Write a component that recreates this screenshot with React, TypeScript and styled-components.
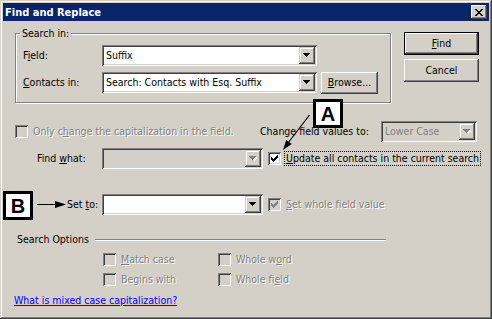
import React from "react";
import styled, { createGlobalStyle, css } from "styled-components";

const UI_FONT = `"DejaVu Sans Condensed", Tahoma, "DejaVu Sans", sans-serif`;

const GlobalStyle = createGlobalStyle`
  html, body { margin: 0; padding: 0; background: #D4D0C8; }
  body { font-family: ${UI_FONT}; font-size: 10.5px; color: #000; }
  *, *::before, *::after { box-sizing: border-box; }
`;

const raised = css`
  box-shadow: inset -1px -1px 0 #404040, inset 1px 1px 0 #fff,
    inset -2px -2px 0 #808080, inset 2px 2px 0 #D4D0C8;
`;

const raisedSoft = css`
  box-shadow: inset -1px -1px 0 #404040, inset 1px 1px 0 #D4D0C8,
    inset -2px -2px 0 #808080, inset 2px 2px 0 #fff;
`;

const sunken = css`
  box-shadow: inset 1px 1px 0 #808080, inset -1px -1px 0 #fff,
    inset 2px 2px 0 #404040, inset -2px -2px 0 #D4D0C8;
`;

const disabledText = css`
  color: #808080;
  text-shadow: 1px 1px 0 #fff;
`;

const Window = styled.div`
  position: relative;
  width: 492px;
  height: 319px;
  padding: 3px;
  background: #D4D0C8;
  box-shadow: inset -1px -1px 0 #404040, inset 1px 1px 0 #D4D0C8,
    inset -2px -2px 0 #808080, inset 2px 2px 0 #fff;
  display: flex;
  flex-direction: column;
  overflow: hidden;
`;

const TitleBar = styled.div`
  height: 18px;
  flex: none;
  background: #0A246A;
  display: flex;
  align-items: center;
  justify-content: space-between;
  padding: 0 2px;
`;

const TitleText = styled.span`
  color: #fff;
  font-weight: bold;
  font-size: 11px;
  line-height: 13px;
`;

const CloseButton = styled.span`
  width: 16px;
  height: 14px;
  background: #D4D0C8;
  ${raised};
  display: flex;
  align-items: center;
  justify-content: center;
`;

const Body = styled.div`
  padding: 12px 0 0 12px;
  display: flex;
  flex-direction: column;
`;

const TopRow = styled.div`
  display: flex;
  align-items: flex-start;
`;

const GroupBox = styled.div`
  position: relative;
  width: 376px;
  height: 70px;
  border: 1px solid #808080;
  box-shadow: inset 1px 1px 0 #fff, 1px 1px 0 #fff;
  padding: 11px 0 0 7px;
  display: grid;
  grid-template-columns: 79px 215px auto;
  grid-auto-rows: 21px;
  row-gap: 6px;
  align-items: center;
`;

const Legend = styled.span`
  position: absolute;
  top: -7px;
  left: 4px;
  padding: 0 2px;
  background: #D4D0C8;
  line-height: 13px;
`;

const Label = styled.span<{ $indent?: number; $disabled?: boolean }>`
  line-height: 13px;
  white-space: nowrap;
  padding-left: ${(p) => p.$indent ?? 0}px;
  ${(p) => p.$disabled && disabledText};
`;

const Key = styled.span`
  text-decoration: underline;
`;

const ButtonColumn = styled.div`
  display: flex;
  flex-direction: column;
  gap: 4px;
  margin: -1px 0 0 13px;
`;

const PushButton = styled.div<{ $default?: boolean; $w: number; $h: number; $gap?: number }>`
  width: ${(p) => p.$w}px;
  height: ${(p) => p.$h}px;
  margin-left: ${(p) => p.$gap ?? 0}px;
  background: #D4D0C8;
  display: flex;
  align-items: center;
  justify-content: center;
  line-height: 13px;
  ${(p) => (p.$default ? "border: 1px solid #000;" : "")}
  ${raised};
`;

const ComboBox = styled.div<{ $w: number; $disabled?: boolean }>`
  width: ${(p) => p.$w}px;
  height: 21px;
  padding: 2px;
  display: flex;
  background: ${(p) => (p.$disabled ? "#D4D0C8" : "#fff")};
  ${sunken};
`;

const ComboText = styled.span<{ $disabled?: boolean }>`
  flex: 1;
  padding-left: 2px;
  line-height: 17px;
  white-space: nowrap;
  overflow: hidden;
  color: ${(p) => (p.$disabled ? "#808080" : "#000")};
`;

const DropButton = styled.span`
  width: 16px;
  height: 17px;
  flex: none;
  background: #D4D0C8;
  display: flex;
  align-items: center;
  justify-content: center;
  ${raisedSoft};
`;

const Box = styled.span<{ $disabled?: boolean }>`
  width: 13px;
  height: 13px;
  flex: none;
  background: ${(p) => (p.$disabled ? "#D4D0C8" : "#fff")};
  display: flex;
  align-items: center;
  justify-content: center;
  ${sunken};
`;

const CheckItem = styled.div<{ $offset?: number }>`
  display: flex;
  align-items: center;
  gap: 5px;
  margin-left: ${(p) => p.$offset ?? 0}px;
`;

const FocusText = styled.span`
  border: 1px dotted #000;
  padding: 0 1px;
  line-height: 13px;
  white-space: nowrap;
  margin-left: -2px;
`;

const CapsRow = styled.div`
  display: grid;
  grid-template-columns: 245px 121px 96px;
  height: 21px;
  align-items: center;
  margin-top: 18px;
`;

const FieldRow = styled.div<{ $top: number }>`
  display: grid;
  grid-template-columns: 87px 161px auto;
  height: 21px;
  align-items: center;
  margin-top: ${(p) => p.$top}px;
`;

const SectionHeader = styled.div`
  display: flex;
  align-items: center;
  width: 371px;
  height: 13px;
  margin-top: 18px;
  padding-left: 2px;
`;

const SectionRule = styled.div`
  flex: 1;
  height: 2px;
  border-top: 1px solid #808080;
  border-bottom: 1px solid #fff;
  margin-left: 6px;
`;

const OptionsGrid = styled.div`
  display: grid;
  grid-template-columns: 115px auto;
  grid-auto-rows: 13px;
  row-gap: 7px;
  margin: 7px 0 0 88px;
`;

const HelpLink = styled.a`
  align-self: flex-start;
  color: #0000ff;
  text-decoration: underline;
  line-height: 13px;
  margin: 8px 0 0 -1px;
  cursor: pointer;
`;

const Callout = styled.div<{ $x: number; $y: number }>`
  position: absolute;
  left: ${(p) => p.$x}px;
  top: ${(p) => p.$y}px;
  width: 30px;
  height: 29px;
  border: 3px solid #000;
  background: #fff;
  display: flex;
  align-items: center;
  justify-content: center;
  font: bold 20px "Liberation Sans", Arial, sans-serif;
  line-height: 1;
`;

const Overlay = styled.svg`
  position: absolute;
  left: 0;
  top: 0;
  pointer-events: none;
`;

const Arrow = ({ disabled }: { disabled?: boolean }) => (
  <svg width="8" height="5" viewBox="0 0 8 5">
    {disabled && <path d="M2 1h7v1H2z M3 2h5v1H3z M4 3h3v1H4z M5 4h1v1H5z" fill="#fff" />}
    <path
      d="M1 0h7v1H1z M2 1h5v1H2z M3 2h3v1H3z M4 3h1v1H4z"
      fill={disabled ? "#808080" : "#000"}
      transform="translate(-1 0)"
    />
  </svg>
);

const CheckMark = ({ disabled }: { disabled?: boolean }) => (
  <svg width="7" height="7" viewBox="0 0 7 7">
    <path
      d="M6 0h1v3H6z M5 1h1v3H5z M4 2h1v3H4z M3 3h1v3H3z M2 4h1v3H2z M1 3h1v3H1z M0 2h1v3H0z"
      fill={disabled ? "#808080" : "#000"}
    />
  </svg>
);

const CloseGlyph = () => (
  <svg width="8" height="7" viewBox="0 0 8 7">
    <path
      d="M0 0h2v1H0z M6 0h2v1H6z M1 1h2v1H1z M5 1h2v1H5z M2 2h4v1H2z M3 3h2v1H3z M2 4h4v1H2z M1 5h2v1H1z M5 5h2v1H5z M0 6h2v1H0z M6 6h2v1H6z"
      fill="#000"
    />
  </svg>
);

const Combo = ({ w, text, disabled }: { w: number; text?: string; disabled?: boolean }) => (
  <ComboBox $w={w} $disabled={disabled}>
    <ComboText $disabled={disabled}>{text}</ComboText>
    <DropButton>
      <Arrow disabled={disabled} />
    </DropButton>
  </ComboBox>
);

const Check = ({
  checked,
  disabled,
  children,
  offset,
}: {
  checked?: boolean;
  disabled?: boolean;
  children: React.ReactNode;
  offset?: number;
}) => (
  <CheckItem $offset={offset}>
    <Box $disabled={disabled}>{checked && <CheckMark disabled={disabled} />}</Box>
    {children}
  </CheckItem>
);

export default function App() {
  return (
    <>
      <GlobalStyle />
      <Window>
        <TitleBar>
          <TitleText>Find and Replace</TitleText>
          <CloseButton>
            <CloseGlyph />
          </CloseButton>
        </TitleBar>
        <Body>
          <TopRow>
            <GroupBox>
              <Legend>Search in:</Legend>
              <Label>
                F<Key>i</Key>eld:
              </Label>
              <Combo w={215} text="Suffix" />
              <span />
              <Label>
                <Key>C</Key>ontacts in:
              </Label>
              <Combo w={215} text="Search: Contacts with Esq. Suffix" />
              <PushButton $w={57} $h={22} $gap={4}>
                <span>
                  <Key>B</Key>rowse...
                </span>
              </PushButton>
            </GroupBox>
            <ButtonColumn>
              <PushButton $default $w={75} $h={23}>
                <span>
                  <Key>F</Key>ind
                </span>
              </PushButton>
              <PushButton $w={75} $h={23}>
                Cancel
              </PushButton>
            </ButtonColumn>
          </TopRow>

          <CapsRow>
            <Check disabled>
              <Label $disabled>
                Only c<Key>h</Key>ange the capitalization in the field.
              </Label>
            </Check>
            <Label>Change field values to:</Label>
            <Combo w={96} text="Lower Case" disabled />
          </CapsRow>

          <FieldRow $top={6}>
            <Label $indent={22}>
              Find <Key>w</Key>hat:
            </Label>
            <Combo w={161} disabled />
            <Check checked offset={5}>
              <FocusText>
                <Key>U</Key>pdate all contacts in the current search
              </FocusText>
            </Check>
          </FieldRow>

          <FieldRow $top={25}>
            <Label $indent={52}>
              Set <Key>t</Key>o:
            </Label>
            <Combo w={161} />
            <Check checked disabled offset={5}>
              <Label $disabled>
                <Key>S</Key>et whole field value
              </Label>
            </Check>
          </FieldRow>

          <SectionHeader>
            <Label>Search Options</Label>
            <SectionRule />
          </SectionHeader>

          <OptionsGrid>
            <Check disabled>
              <Label $disabled>
                <Key>M</Key>atch case
              </Label>
            </Check>
            <Check disabled>
              <Label $disabled>
                Whole w<Key>o</Key>rd
              </Label>
            </Check>
            <Check disabled>
              <Label $disabled>
                Be<Key>g</Key>ins with
              </Label>
            </Check>
            <Check disabled>
              <Label $disabled>
                Whole fi<Key>e</Key>ld
              </Label>
            </Check>
          </OptionsGrid>

          <HelpLink>What is mixed case capitalization?</HelpLink>
        </Body>

        <Callout $x={313} $y={99}>A</Callout>
        <Callout $x={3} $y={191}>B</Callout>
        <Overlay width={492} height={319}>
          <line x1={37} y1={204.5} x2={58} y2={204.5} stroke="#000" strokeWidth={1} />
          <polygon points="55,201 66,204.5 55,208" fill="#000" />
          <line x1={309.5} y1={115} x2={288} y2={143} stroke="#000" strokeWidth={1.2} />
          <polygon points="283,150 286.2,139.9 291.8,144.1" fill="#000" />
        </Overlay>
      </Window>
    </>
  );
}
